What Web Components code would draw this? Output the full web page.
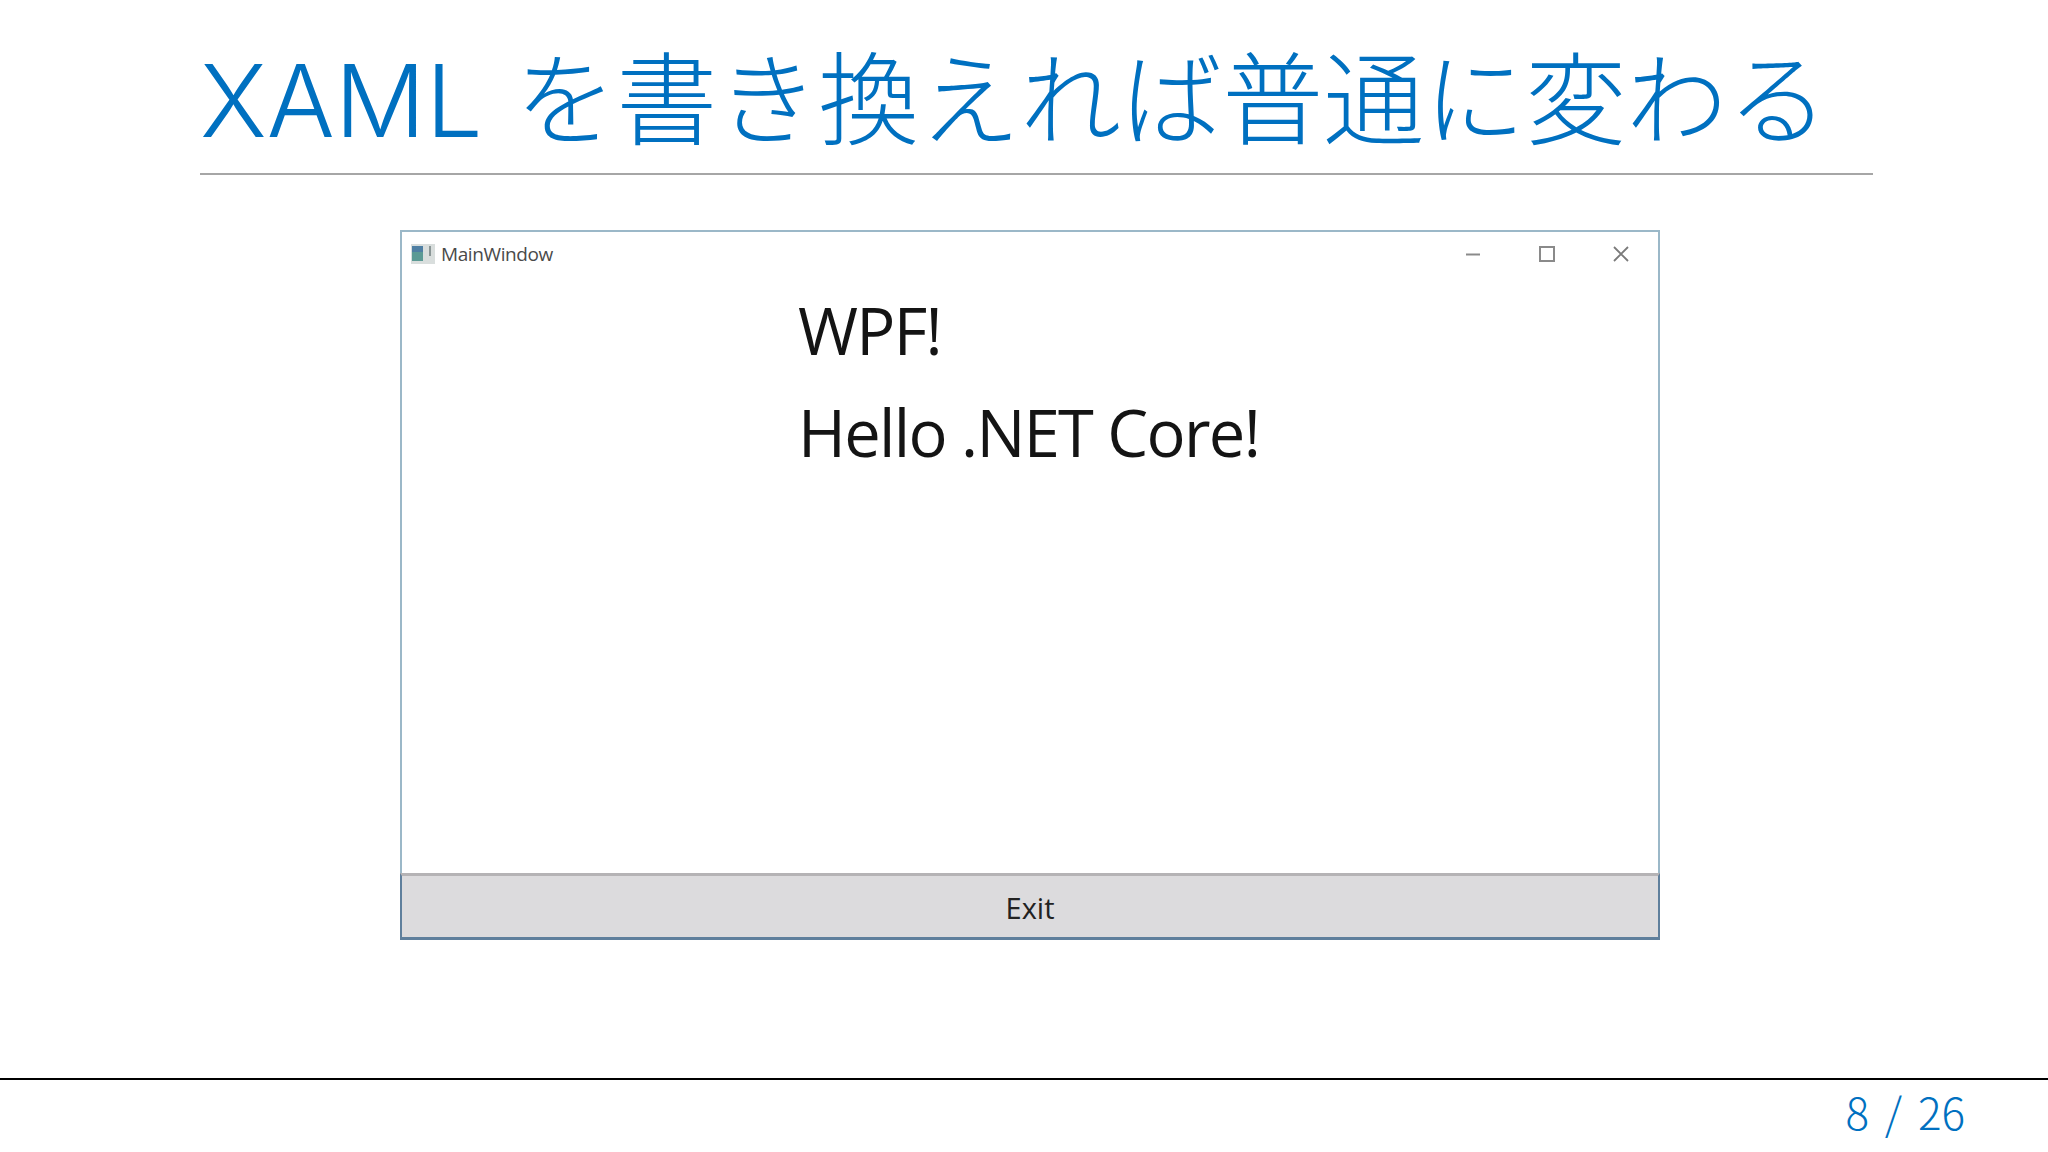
<!DOCTYPE html>
<html lang="ja">
<head>
<meta charset="utf-8">
<title>XAML</title>
<style>
  html, body { margin: 0; background: #fff; }
</style>
</head>
<body>
<slide-page>
  <span slot="title">XAML を書き換えれば普通に変わる</span>
  <wpf-window>
    <span slot="lines">WPF!</span>
    <span slot="lines">Hello .NET Core!</span>
    <span slot="button">Exit</span>
  </wpf-window>
  <span slot="page">8 / 26</span>
</slide-page>

<script>
class SlidePage extends HTMLElement {
  constructor() {
    super();
    this.attachShadow({mode: 'open'});
    this.shadowRoot.innerHTML = `
    <style>
      :host {
        display: flex;
        flex-direction: column;
        width: 2048px;
        height: 1152px;
        overflow: hidden;
        color: #0070c0;
        font-family: "Noto Sans CJK JP", "Noto Sans", sans-serif;
      }
      header {
        box-sizing: border-box;
        height: 175px;
        margin: 0 175px 0 200px;
        border-bottom: 2px solid #a6a6a6;
        font-family: Inter, "Noto Sans CJK JP", sans-serif;
        font-size: 101px;
        font-weight: 300;
        line-height: 200px;
        word-spacing: 4px;
        white-space: nowrap;
      }
      main {
        flex: 1;
        box-sizing: border-box;
        padding: 55px 0 0 400px;
      }
      footer {
        box-sizing: border-box;
        height: 74px;
        border-top: 2px solid #000;
        padding: 0 83px 0 0;
        text-align: right;
        font-size: 44px;
        font-weight: 300;
        line-height: 62px;
        word-spacing: 6px;
      }
    </style>
    <header><slot name="title"></slot></header>
    <main><slot></slot></main>
    <footer><slot name="page"></slot></footer>`;
  }
}
customElements.define('slide-page', SlidePage);

class WpfWindow extends HTMLElement {
  constructor() {
    super();
    this.attachShadow({mode: 'open'});
    this.shadowRoot.innerHTML = `
    <style>
      :host {
        display: flex;
        flex-direction: column;
        box-sizing: border-box;
        width: 1260px;
        height: 710px;
        border: 2px solid #9bb8c8;
        border-bottom: 0;
        color: #141414;
        font-family: "Open Sans", "Noto Sans", sans-serif;
      }
      .bar {
        display: flex;
        align-items: center;
        height: 44px;
        padding-left: 9px;
        color: #4a4a4a;
        font-size: 19px;
        letter-spacing: -0.4px;
      }
      .bar svg.app { margin-right: 6px; }
      .name { flex: 1; }
      .ctl {
        display: flex;
        justify-content: center;
        width: 74px;
      }
      .body {
        flex: 1;
        display: flex;
        flex-direction: column;
        padding: 3px 0 0 396px;
        font-size: 65px;
        line-height: 102px;
        letter-spacing: -1.7px;
      }
      ::slotted([slot="lines"]) { display: block; }
      .exit {
        box-sizing: border-box;
        height: 67px;
        border: solid #5f7f9c;
        border-width: 0 2px 3px 2px;
        border-top: 3px solid #b5b3b5;
        margin: 0 -2px;
        background: #dcdbdd;
        color: #222;
        font-size: 29px;
        line-height: 64px;
        text-align: center;
      }
    </style>
    <div class="bar">
      <svg class="app" width="24" height="20" viewBox="0 0 24 20">
        <rect width="24" height="20" fill="#d9dedd"/>
        <rect x="1" y="2" width="11" height="15" fill="#5b9a94"/>
        <rect x="1" y="2" width="11" height="6" fill="#4f7fa3"/>
        <rect x="18" y="2" width="2" height="10" fill="#8a9696"/>
      </svg>
      <span class="name">MainWindow</span>
      <span class="ctl"><svg width="16" height="16" viewBox="0 0 16 16"><path d="M1 8.500H15" stroke="#8a8a8a" stroke-width="2" fill="none"/></svg></span>
      <span class="ctl"><svg width="16" height="16" viewBox="0 0 16 16"><rect x="1" y="1" width="14" height="14" stroke="#8a8a8a" stroke-width="2" fill="none"/></svg></span>
      <span class="ctl"><svg width="18" height="18" viewBox="0 0 18 18"><path d="M2 2L16 16M16 2L2 16" stroke="#7a7a7a" stroke-width="1.800" fill="none"/></svg></span>
    </div>
    <div class="body"><slot name="lines"></slot></div>
    <div class="exit"><slot name="button"></slot></div>`;
  }
}
customElements.define('wpf-window', WpfWindow);
</script>
</body>
</html>
